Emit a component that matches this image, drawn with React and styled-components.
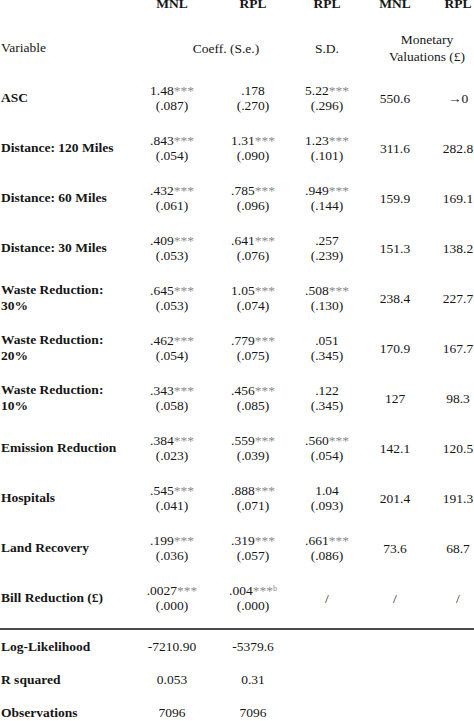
import React from 'react';
import styled, { createGlobalStyle } from 'styled-components';

const GlobalStyle = createGlobalStyle`
  html, body {
    margin: 0;
    padding: 0;
    background: #ffffff;
    overflow: hidden;
  }
  body {
    width: 474px;
    height: 721px;
    font-family: "Liberation Serif", "Times New Roman", serif;
    color: #161616;
  }
`;

const COLUMNS = '136px 72px 90px 58px 78px 48px';

const Table = styled.div`
  width: 482px;
  margin-top: -17px;
  font-size: 13.5px;
`;

const Row = styled.div`
  display: grid;
  grid-template-columns: ${COLUMNS};
  height: ${(p) => p.$height}px;
`;

const Cell = styled.div`
  display: flex;
  flex-direction: column;
  justify-content: center;
  align-items: center;
  text-align: center;
  line-height: 15px;
  white-space: nowrap;
  grid-column: ${(p) => (p.$span ? `span ${p.$span}` : 'auto')};
  padding-left: ${(p) => p.$shift || 0}px;
  font-weight: ${(p) => (p.$bold ? 700 : 400)};
`;

const Label = styled.div`
  display: flex;
  flex-direction: column;
  justify-content: center;
  align-items: flex-start;
  padding-left: 1px;
  line-height: 16px;
  font-weight: ${(p) => (p.$plain ? 400 : 700)};
  white-space: nowrap;
`;

const HeadText = styled.div`
  line-height: 17px;
`;

const Stars = styled.span`
  color: #8a8a8a;
`;

const Sup = styled.sup`
  color: #8a8a8a;
  font-size: 8px;
  line-height: 0;
  vertical-align: 4px;
`;

const Rule = styled.div`
  height: 2px;
  margin-top: 5px;
  background: #4d4d4d;
`;

const rows = [
  { label: ['ASC'], c: [['1.48', '(.087)'], ['.178', '(.270)'], ['5.22', '(.296)']], s: [1, 0, 1], mnl: '550.6', rpl: '→0' },
  { label: ['Distance: 120 Miles'], c: [['.843', '(.054)'], ['1.31', '(.090)'], ['1.23', '(.101)']], s: [1, 1, 1], mnl: '311.6', rpl: '282.8' },
  { label: ['Distance: 60 Miles'], c: [['.432', '(.061)'], ['.785', '(.096)'], ['.949', '(.144)']], s: [1, 1, 1], mnl: '159.9', rpl: '169.1' },
  { label: ['Distance: 30 Miles'], c: [['.409', '(.053)'], ['.641', '(.076)'], ['.257', '(.239)']], s: [1, 1, 0], mnl: '151.3', rpl: '138.2' },
  { label: ['Waste Reduction:', '30%'], c: [['.645', '(.053)'], ['1.05', '(.074)'], ['.508', '(.130)']], s: [1, 1, 1], mnl: '238.4', rpl: '227.7' },
  { label: ['Waste Reduction:', '20%'], c: [['.462', '(.054)'], ['.779', '(.075)'], ['.051', '(.345)']], s: [1, 1, 0], mnl: '170.9', rpl: '167.7' },
  { label: ['Waste Reduction:', '10%'], c: [['.343', '(.058)'], ['.456', '(.085)'], ['.122', '(.345)']], s: [1, 1, 0], mnl: '127', rpl: '98.3' },
  { label: ['Emission Reduction'], c: [['.384', '(.023)'], ['.559', '(.039)'], ['.560', '(.054)']], s: [1, 1, 1], mnl: '142.1', rpl: '120.5' },
  { label: ['Hospitals'], c: [['.545', '(.041)'], ['.888', '(.071)'], ['1.04', '(.093)']], s: [1, 1, 0], mnl: '201.4', rpl: '191.3' },
  { label: ['Land Recovery'], c: [['.199', '(.036)'], ['.319', '(.057)'], ['.661', '(.086)']], s: [1, 1, 1], mnl: '73.6', rpl: '68.7' },
];

const footer = [
  ['Log-Likelihood', '-7210.90', '-5379.6'],
  ['R squared', '0.053', '0.31'],
  ['Observations', '7096', '7096'],
];

function Estimate({ value, se, stars, sup }) {
  return (
    <Cell>
      <div>
        {value}
        {stars ? <Stars>***</Stars> : null}
        {sup ? <Sup>{sup}</Sup> : null}
      </div>
      <div>{se}</div>
    </Cell>
  );
}

export default function App() {
  return (
    <>
      <GlobalStyle />
      <Table>
        <Row $height={40}>
          <Cell />
          <Cell $bold>MNL</Cell>
          <Cell $bold>RPL</Cell>
          <Cell $bold>RPL</Cell>
          <Cell $bold>MNL</Cell>
          <Cell $bold>RPL</Cell>
        </Row>
        <Row $height={50}>
          <Label $plain>Variable</Label>
          <Cell $span={2} $shift={18}>Coeff. (S.e.)</Cell>
          <Cell>S.D.</Cell>
          <Cell $span={2} $shift={16}>
            <HeadText>Monetary</HeadText>
            <HeadText>Valuations (£)</HeadText>
          </Cell>
        </Row>
        {rows.map((r) => (
          <Row key={r.label.join(' ')} $height={50}>
            <Label>
              {r.label.map((l) => (
                <div key={l}>{l}</div>
              ))}
            </Label>
            {r.c.map(([v, se], i) => (
              <Estimate key={i} value={v} se={se} stars={r.s[i]} />
            ))}
            <Cell>{r.mnl}</Cell>
            <Cell>{r.rpl}</Cell>
          </Row>
        ))}
        <Row $height={50}>
          <Label>Bill Reduction (£)</Label>
          <Estimate value=".0027" se="(.000)" stars />
          <Estimate value=".004" se="(.000)" stars sup="b" />
          <Cell>/</Cell>
          <Cell>/</Cell>
          <Cell>/</Cell>
        </Row>
        <Rule />
        {footer.map(([label, mnl, rpl]) => (
          <Row key={label} $height={33}>
            <Label>{label}</Label>
            <Cell>{mnl}</Cell>
            <Cell>{rpl}</Cell>
          </Row>
        ))}
      </Table>
    </>
  );
}
